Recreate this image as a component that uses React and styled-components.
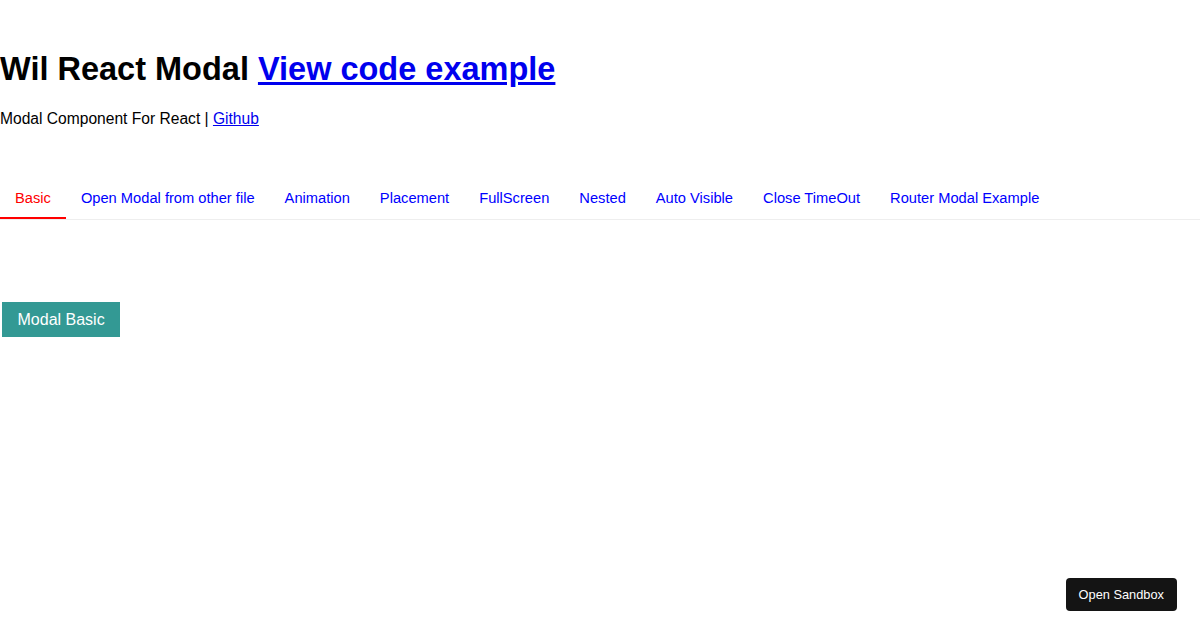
import React, { useState } from "react";
import styled, { createGlobalStyle } from "styled-components";

const GlobalStyle = createGlobalStyle`
  html, body {
    margin: 0;
    padding: 0;
    background: #fff;
  }
  body {
    font-family: "Liberation Sans", Arial, sans-serif;
    color: #000;
  }
`;

const Page = styled.div`
  padding-top: 30px;
`;

const Title = styled.h1`
  margin: 21.44px 0;
  font-size: 32.5px;
  line-height: 37px;
  font-weight: bold;
  a {
    color: #0000ee;
    text-decoration: underline;
  }
`;

const Subtitle = styled.p`
  margin: 16px 0;
  font-size: 15.6px;
  line-height: 18.4px;
  a {
    color: #0000ee;
  }
`;

const TabList = styled.div`
  display: flex;
  margin-top: 48px;
  border-bottom: 1px solid #eeeeee;
`;

const Tab = styled.div`
  padding: 13.5px 15px 10.5px;
  font-size: 14.68px;
  line-height: 16.7px;
  color: ${(p) => (p.$active ? "#ff0000" : "#0000ff")};
  border-bottom: 2px solid ${(p) => (p.$active ? "#ff0000" : "transparent")};
  cursor: pointer;
  white-space: nowrap;
`;

const Panel = styled.div`
  padding: 82px 2px 0;
`;

const ModalButton = styled.button`
  font-family: "Liberation Sans", Arial, sans-serif;
  font-size: 16px;
  line-height: 19px;
  padding: 8px 15.5px;
  border: none;
  background: #339994;
  color: #fff;
  cursor: pointer;
`;

const SandboxButton = styled.a`
  position: fixed;
  right: 23px;
  bottom: 19px;
  padding: 9px 13px;
  font-size: 12.8px;
  line-height: 15px;
  color: #fff;
  background: #141414;
  border-radius: 4px;
  text-decoration: none;
`;

const tabs = [
  "Basic",
  "Open Modal from other file",
  "Animation",
  "Placement",
  "FullScreen",
  "Nested",
  "Auto Visible",
  "Close TimeOut",
  "Router Modal Example"
];

const App = () => {
  const [active, setActive] = useState(0);
  return (
    <Page>
      <GlobalStyle />
      <Title>
        Wil React Modal <a href="#">View code example</a>
      </Title>
      <Subtitle>
        Modal Component For React | <a href="#">Github</a>
      </Subtitle>
      <TabList>
        {tabs.map((t, i) => (
          <Tab key={t} $active={i === active} onClick={() => setActive(i)}>
            {t}
          </Tab>
        ))}
      </TabList>
      <Panel>
        <ModalButton>Modal Basic</ModalButton>
      </Panel>
      <SandboxButton href="#">Open Sandbox</SandboxButton>
    </Page>
  );
};

export default App;
